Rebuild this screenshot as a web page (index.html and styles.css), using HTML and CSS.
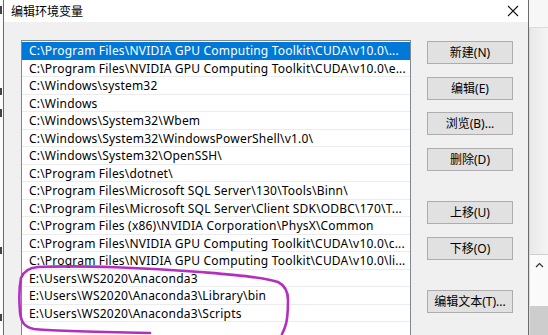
FILE: index.html
```html
<!DOCTYPE html>
<html>
<head>
<meta charset="utf-8">
<link rel="stylesheet" href="styles.css">
</head>
<body>
<div class="screen">
  <div class="bg-left">
    <div class="mark m1"></div>
    <div class="mark m2"></div>
    <div class="mark m3"></div>
    <div class="mark m4"></div>
    <div class="mark m5"></div>
  </div>
  <div class="dialog">
    <div class="titlebar">
      <span class="title">编辑环境变量</span>
      <svg class="close" width="12" height="12" viewBox="0 0 12 12"><path d="M1 1L11 11M11 1L1 11" stroke="#111" stroke-width="1.1" fill="none"/></svg>
    </div>
    <div class="content">
      <div class="list">
        <div class="row sel">C:\Program Files\NVIDIA GPU Computing Toolkit\CUDA\v10.0\...</div>
        <div class="row">C:\Program Files\NVIDIA GPU Computing Toolkit\CUDA\v10.0\e...</div>
        <div class="row">C:\Windows\system32</div>
        <div class="row">C:\Windows</div>
        <div class="row">C:\Windows\System32\Wbem</div>
        <div class="row">C:\Windows\System32\WindowsPowerShell\v1.0\</div>
        <div class="row">C:\Windows\System32\OpenSSH\</div>
        <div class="row">C:\Program Files\dotnet\</div>
        <div class="row">C:\Program Files\Microsoft SQL Server\130\Tools\Binn\</div>
        <div class="row">C:\Program Files\Microsoft SQL Server\Client SDK\ODBC\170\T...</div>
        <div class="row">C:\Program Files (x86)\NVIDIA Corporation\PhysX\Common</div>
        <div class="row">C:\Program Files\NVIDIA GPU Computing Toolkit\CUDA\v10.0\c...</div>
        <div class="row">C:\Program Files\NVIDIA GPU Computing Toolkit\CUDA\v10.0\li...</div>
        <div class="row">E:\Users\WS2020\Anaconda3</div>
        <div class="row">E:\Users\WS2020\Anaconda3\Library\bin</div>
        <div class="row">E:\Users\WS2020\Anaconda3\Scripts</div>
        <div class="row"></div>
      </div>
      <div class="buttons">
        <div class="btn">新建(N)</div>
        <div class="btn">编辑(E)</div>
        <div class="btn">浏览(B)...</div>
        <div class="btn">删除(D)</div>
        <div class="btn group">上移(U)</div>
        <div class="btn">下移(O)</div>
        <div class="btn group">编辑文本(T)...</div>
      </div>
    </div>
  </div>
  <div class="bg-right">
    <div class="r-top"></div>
    <div class="r-mid"></div>
    <div class="r-scroll">
      <svg class="up" width="9" height="6" viewBox="0 0 9 6"><path d="M1 5L4.5 1.5L8 5" stroke="#333" stroke-width="1.2" fill="none"/></svg>
      <div class="thumb"></div>
    </div>
  </div>
</div>
<svg class="annot" width="548" height="335" viewBox="0 0 548 335">
  <path d="M150 333 C100 332 50 331 34 329 C24 327 21 322 20 312 C19 300 19 288 21 278 C23 272 28 268 38 267 C80 265 150 268 200 272 C235 275 262 277 278 282 C286 286 288 292 288 300 C288 310 288 320 285 327 C284 330 283 332 282 334" stroke="#b32fc2" stroke-width="2.6" fill="none" stroke-linecap="round"/>
</svg>
</body>
</html>
```
FILE: styles.css
```css
html, body {
  margin: 0;
  padding: 0;
}
body {
  width: 548px;
  height: 335px;
  overflow: hidden;
  position: relative;
  background: #f0f0f0;
  font-family: "Noto Sans", "Noto Sans CJK SC", sans-serif;
}
.screen {
  display: flex;
  height: 335px;
}
.bg-left {
  width: 3px;
  background: #fbfbfb;
  flex: none;
  display: flex;
  flex-direction: column;
}
.mark {
  width: 2px;
  background: #444;
}
.m1 { height: 8px; margin-top: 6px; }
.m2 { height: 7px; margin-top: 74px; }
.m3 { height: 8px; margin-top: 14px; }
.m4 { height: 7px; margin-top: 130px; }
.m5 { height: 7px; margin-top: 60px; }
.dialog {
  width: 524px;
  flex: none;
  border-left: 1px solid #6b6b6b;
  border-right: 1px solid #6b6b6b;
  background: #f0f0f0;
  display: flex;
  flex-direction: column;
}
.titlebar {
  height: 22px;
  background: #ffffff;
  display: flex;
  align-items: center;
  justify-content: space-between;
  padding: 0 9px 0 7px;
}
.title {
  font-size: 12px;
  color: #000;
  font-family: "Noto Sans CJK SC", sans-serif;
  line-height: 22px;
}
.content {
  display: flex;
  padding: 18px 0 0 17px;
}
.list {
  width: 388px;
  border: 1px solid #828790;
  background: #fff;
  height: 300px;
  padding-top: 1px;
  overflow: hidden;
}
.row {
  height: 17.5px;
  box-sizing: border-box;
  border-bottom: 1px solid #ececec;
  padding-left: 7px;
  font-size: 12px;
  letter-spacing: 0.2px;
  line-height: 17px;
  white-space: nowrap;
  overflow: hidden;
  color: #000;
}
.row.sel {
  background: #0078d7;
  color: #fff;
  border-bottom-color: #0078d7;
}
.buttons {
  margin-left: 16px;
  padding-top: 1px;
  display: flex;
  flex-direction: column;
  gap: 12.5px;
}
.btn {
  width: 86px;
  height: 23px;
  box-sizing: border-box;
  border: 1px solid #adadad;
  background: #e1e1e1;
  font-size: 12px;
  line-height: 21px;
  text-align: center;
  color: #000;
}
.btn.group {
  margin-top: 18px;
}
.bg-right {
  flex: 1;
  display: flex;
  flex-direction: column;
  background: #f3f3f3;
}
.r-top {
  height: 27px;
  background: #f7f7f7;
  border-bottom: 1px solid #dcdcdc;
}
.r-mid {
  height: 226px;
  background: linear-gradient(90deg, #e9e9e9, #f4f4f4);
  border-left: 1px solid #d8d8d8;
}
.r-scroll {
  flex: 1;
  background: #fafafa;
  border-left: 1px solid #dcdcdc;
  border-top: 1px solid #d0d0d0;
  display: flex;
  flex-direction: column;
  align-items: center;
}
.up {
  margin-top: 7px;
}
.thumb {
  margin-top: 38px;
  width: 100%;
  flex: 1;
  background: #cdcdcd;
}
.annot {
  position: absolute;
  left: 0;
  top: 0;
  pointer-events: none;
}
```
